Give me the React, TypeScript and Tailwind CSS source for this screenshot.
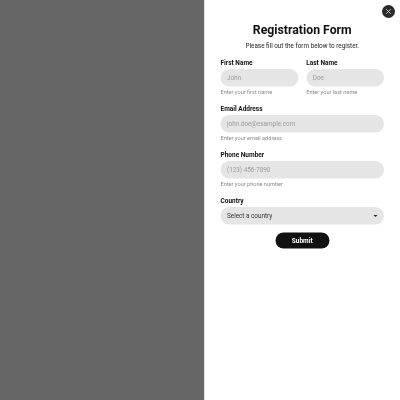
const font = "font-['Roboto','Noto_Sans',sans-serif]";

function Field({ label, placeholder, hint }: { label: string; placeholder: string; hint: string }) {
  return (
    <div className="flex flex-col">
      <label className="text-[13px] leading-[20px] font-bold text-[#111]">{label}</label>
      <input
        className="mt-[3px] h-[35px] w-full rounded-full bg-[#e5e5e5] px-[13px] text-[12.7px] outline-none placeholder:text-[#9a9a9a]"
        placeholder={placeholder}
      />
      <span className="mt-[3px] text-[11.2px] leading-[16px] text-[#8a8a8a]">{hint}</span>
    </div>
  );
}

export default function App() {
  return (
    <div className="h-[400px] w-[400px] overflow-hidden">
      <div className={`${font} flex h-[800px] w-[800px] origin-top-left scale-50 blur-[0.5px]`}>
        <div className="w-[408px] shrink-0 bg-[#666666]" />
        <div className="relative flex flex-1 flex-col border-l-2 border-[#e5e5e5] bg-white pt-[42px] pr-8 pl-[31px]">
          <button className="absolute top-[10px] right-[10px] flex h-[26px] w-[26px] items-center justify-center rounded-full bg-[#2b2b2b]">
            <svg width="14" height="14" viewBox="0 0 24 24" fill="none" stroke="#d8d8d8" strokeWidth="3">
              <path d="M4 4l16 16M20 4L4 20" />
            </svg>
          </button>
          <h1 className="text-center text-[24.5px] leading-[36px] font-bold text-[#111]">Registration Form</h1>
          <p className="mt-[3px] text-center text-[12.7px] leading-[20px] text-[#222]">
            Please fill out the form below to register.
          </p>
          <div className="mt-[14px] flex flex-col gap-[15px]">
            <div className="grid grid-cols-2 gap-[16px]">
              <Field label="First Name" placeholder="John" hint="Enter your first name" />
              <Field label="Last Name" placeholder="Doe" hint="Enter your last name" />
            </div>
            <Field label="Email Address" placeholder="john.doe@example.com" hint="Enter your email address" />
            <Field label="Phone Number" placeholder="(123) 456-7890" hint="Enter your phone number" />
            <div className="flex flex-col">
              <label className="text-[13px] leading-[20px] font-bold text-[#111]">Country</label>
              <div className="mt-[3px] flex h-[35px] items-center justify-between rounded-full bg-[#e5e5e5] px-[13px] text-[12.7px] text-[#333]">
                <span>Select a country</span>
                <span className="h-0 w-0 border-x-[4px] border-t-[4px] border-x-transparent border-t-[#222]" />
              </div>
            </div>
          </div>
          <button className="mx-auto mt-[16px] h-[32px] w-[108px] rounded-full bg-[#111] text-[13px] font-bold text-white">
            Submit
          </button>
        </div>
      </div>
    </div>
  );
}
